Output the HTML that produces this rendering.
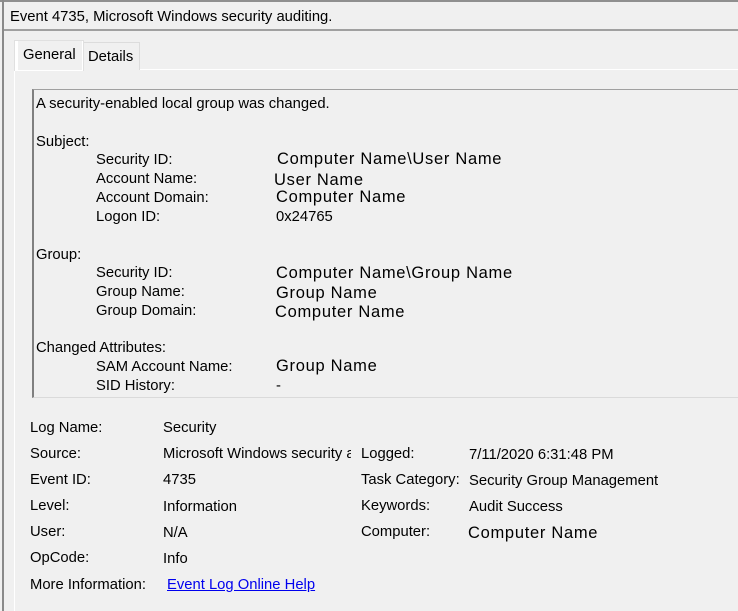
<!DOCTYPE html>
<html><head><style>
body{margin:0;width:738px;height:611px;background:#f0f0f0;position:relative;overflow:hidden;font-family:"Liberation Sans",sans-serif;font-size:14.8px;color:#000}
div{position:absolute;white-space:nowrap}
.t{line-height:18px;height:18px;margin-top:1px}
.b{font-size:16.5px;letter-spacing:0.7px}
</style></head><body>
<div style="left:0;top:0;width:738px;height:2px;background:#8f8f8f"></div>
<div style="left:2px;top:0;width:2px;height:611px;background:#8a8a8a"></div>
<div style="left:4px;top:29px;width:734px;height:2px;background:#a0a0a0"></div>
<div class="t" style="left:10px;top:7px">Event 4735, Microsoft Windows security auditing.</div>
<div style="left:18px;top:69px;width:720px;height:1px;background:#fff"></div>
<div style="left:14px;top:70px;width:1px;height:541px;background:#fff"></div>
<div style="left:82px;top:42px;width:56px;height:27px;border:1px solid #dcdcdc;border-bottom:none;background:#f0f0f0"></div>
<div style="left:14px;top:40px;width:68px;height:30px;background:#fff;border:1px solid #e0e0e0;border-bottom:none"></div>
<div style="left:18px;top:41px;width:64px;height:29px;background:#f0f0f0"></div>
<div class="t" style="left:23px;top:45px">General</div>
<div class="t" style="left:88px;top:47px">Details</div>
<div style="left:32px;top:89px;width:706px;height:307px;border-top:1px solid #a0a0a0;border-left:2px solid #808080;border-bottom:1px solid #dadada"></div>
<div class="t" style="left:36px;top:94px">A security-enabled local group was changed.</div>
<div class="t" style="left:36px;top:132px">Subject:</div>
<div class="t" style="left:96px;top:150px">Security ID:</div>
<div class="t" style="left:96px;top:169px">Account Name:</div>
<div class="t" style="left:96px;top:188px">Account Domain:</div>
<div class="t" style="left:96px;top:207px">Logon ID:</div>
<div class="t b" style="left:277px;top:149px">Computer Name\User Name</div>
<div class="t b" style="left:274px;top:170px">User Name</div>
<div class="t b" style="left:276px;top:187px">Computer Name</div>
<div class="t" style="left:276px;top:207px">0x24765</div>
<div class="t" style="left:36px;top:245px">Group:</div>
<div class="t" style="left:96px;top:263px">Security ID:</div>
<div class="t" style="left:96px;top:282px">Group Name:</div>
<div class="t" style="left:96px;top:301px">Group Domain:</div>
<div class="t b" style="left:276px;top:263px">Computer Name\Group Name</div>
<div class="t b" style="left:276px;top:283px">Group Name</div>
<div class="t b" style="left:275px;top:302px">Computer Name</div>
<div class="t" style="left:36px;top:338px">Changed Attributes:</div>
<div class="t" style="left:96px;top:357px">SAM Account Name:</div>
<div class="t" style="left:96px;top:376px">SID History:</div>
<div class="t b" style="left:276px;top:356px">Group Name</div>
<div class="t" style="left:276px;top:376px">-</div>
<div class="t" style="left:30px;top:418px">Log Name:</div>
<div class="t" style="left:163px;top:418px">Security</div>
<div class="t" style="left:30px;top:444px">Source:</div>
<div class="t" style="left:163px;top:444px;width:188px;overflow:hidden">Microsoft Windows security auditing.</div>
<div class="t" style="left:30px;top:470px">Event ID:</div>
<div class="t" style="left:163px;top:470px">4735</div>
<div class="t" style="left:30px;top:496px">Level:</div>
<div class="t" style="left:163px;top:497px">Information</div>
<div class="t" style="left:30px;top:522px">User:</div>
<div class="t" style="left:163px;top:523px">N/A</div>
<div class="t" style="left:30px;top:548px">OpCode:</div>
<div class="t" style="left:163px;top:549px">Info</div>
<div class="t" style="left:30px;top:575px">More Information:</div>
<div class="t" style="left:167px;top:575px;color:#0000ee;text-decoration:underline">Event Log Online Help</div>
<div class="t" style="left:361px;top:444px">Logged:</div>
<div class="t" style="left:469px;top:445px">7/11/2020 6:31:48 PM</div>
<div class="t" style="left:361px;top:470px">Task Category:</div>
<div class="t" style="left:469px;top:471px">Security Group Management</div>
<div class="t" style="left:361px;top:496px">Keywords:</div>
<div class="t" style="left:469px;top:497px">Audit Success</div>
<div class="t" style="left:361px;top:522px">Computer:</div>
<div class="t b" style="left:468px;top:523px">Computer Name</div>
</body></html>
